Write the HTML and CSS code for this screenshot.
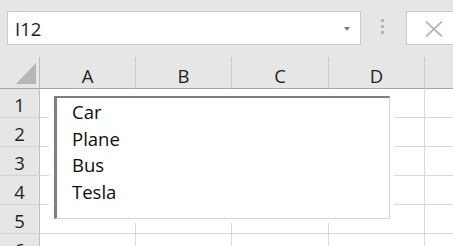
FILE: index.html
```html
<!DOCTYPE html>
<html>
<head>
<meta charset="utf-8">
<link rel="stylesheet" href="styles.css">
</head>
<body>
<div class="app">
  <div class="formula-bar">
    <div class="namebox">
      <span class="namebox-text">I12</span>
      <span class="arrow"></span>
    </div>
    <div class="dots"><i></i><i></i><i></i></div>
    <div class="cancel">
      <svg width="18" height="16" viewBox="0 0 18 16"><path d="M1 0.5 L17 15.5 M17 0.5 L1 15.5" stroke="#b8b8b8" stroke-width="1.8" fill="none"/></svg>
    </div>
  </div>
  <div class="sheet">
    <div class="hdr corner"><span class="tri"></span></div>
    <div class="hdr col">A</div>
    <div class="hdr col">B</div>
    <div class="hdr col">C</div>
    <div class="hdr col">D</div>
    <div class="hdr col last"></div>

    <div class="hdr row">1</div><div class="cell"></div><div class="cell"></div><div class="cell"></div><div class="cell"></div><div class="cell last"></div>
    <div class="hdr row">2</div><div class="cell"></div><div class="cell"></div><div class="cell"></div><div class="cell"></div><div class="cell last"></div>
    <div class="hdr row">3</div><div class="cell"></div><div class="cell"></div><div class="cell"></div><div class="cell"></div><div class="cell last"></div>
    <div class="hdr row">4</div><div class="cell"></div><div class="cell"></div><div class="cell"></div><div class="cell"></div><div class="cell last"></div>
    <div class="hdr row">5</div><div class="cell"></div><div class="cell"></div><div class="cell"></div><div class="cell"></div><div class="cell last"></div>
    <div class="hdr row">6</div><div class="cell"></div><div class="cell"></div><div class="cell"></div><div class="cell"></div><div class="cell last"></div>

    <div class="textbox-wrap">
      <div class="textbox">
        <div>Car</div>
        <div>Plane</div>
        <div>Bus</div>
        <div>Tesla</div>
      </div>
    </div>
  </div>
</div>
</body>
</html>
```

FILE: styles.css
```css
html, body {
  margin: 0;
  padding: 0;
}
body {
  background: #e6e6e6;
  font-family: "Open Sans", "Noto Sans", sans-serif;
  color: #222;
  width: 453px;
  height: 246px;
  overflow: hidden;
}
.app {
  width: 453px;
  height: 246px;
  overflow: hidden;
}
.formula-bar {
  height: 57px;
  box-sizing: border-box;
  padding: 11px 0 0 7px;
  display: flex;
  align-items: flex-start;
}
.namebox {
  flex-shrink: 0;
  width: 354px;
  height: 34px;
  box-sizing: border-box;
  background: #fff;
  border: 1px solid #c8c8c8;
  display: flex;
  align-items: center;
  padding-left: 7px;
}
.namebox-text {
  flex: 1;
  font-size: 18.5px;
  line-height: 32px;
  padding-top: 1px;
  color: #222;
}
.arrow {
  width: 0;
  height: 0;
  border-left: 3.5px solid transparent;
  border-right: 3.5px solid transparent;
  border-top: 4px solid #7a7a7a;
  margin-right: 10px;
  margin-top: 1px;
}
.dots {
  flex-shrink: 0;
  margin-left: 20px;
  margin-top: 8px;
  display: flex;
  flex-direction: column;
  gap: 3px;
}
.dots i {
  display: block;
  width: 3px;
  height: 3px;
  background: #b4b4b4;
}
.cancel {
  flex-shrink: 0;
  margin-left: 22px;
  width: 80px;
  height: 34px;
  box-sizing: border-box;
  background: #fff;
  border: 1px solid #c8c8c8;
  display: flex;
  align-items: center;
  padding-left: 18px;
}
.cancel svg {
  display: block;
  margin-top: 1px;
}
.sheet {
  position: relative;
  display: grid;
  grid-template-columns: 40px 96px 96px 97px 96px 60px;
  grid-template-rows: 32px repeat(5, 29px) 29px;
}
.hdr {
  background: #e6e6e6;
  box-sizing: border-box;
  font-size: 18.5px;
  color: #1f1f1f;
  display: flex;
  align-items: center;
  justify-content: center;
}
.corner {
  border-right: 1px solid #bdbdbd;
  border-bottom: 1px solid #a6a6a6;
  position: relative;
}
.tri {
  position: absolute;
  left: 16px;
  top: 6px;
  width: 0;
  height: 0;
  border-left: 20px solid transparent;
  border-bottom: 21px solid #b6b6b6;
}
.col {
  border-right: 1px solid #c9c9c9;
  border-bottom: 1px solid #a6a6a6;
  padding-top: 6px;
  line-height: 24px;
}
.col.last {
  border-right: none;
}
.row {
  border-right: 1px solid #bdbdbd;
  border-bottom: 1px solid #d2d2d2;
  padding-top: 3px;
  line-height: 24px;
}
.cell {
  background: #fff;
  box-sizing: border-box;
  border-right: 1px solid #d9d9d9;
  border-bottom: 1px solid #d9d9d9;
}
.cell.last {
  border-right: none;
}
.textbox-wrap {
  position: absolute;
  left: 49px;
  top: 32px;
  width: 345px;
  height: 134px;
  box-sizing: border-box;
  background: #fff;
  padding: 7px 0 0 5px;
}
.textbox {
  width: 336px;
  height: 123px;
  box-sizing: border-box;
  border-left: 3px solid #7f7f7f;
  border-top: 2px solid #7f7f7f;
  border-right: 1px solid #d6d6d6;
  border-bottom: 1px solid #d6d6d6;
  padding: 1px 0 0 15px;
  font-size: 18.5px;
  line-height: 26.7px;
  color: #0d0d0d;
}
```
